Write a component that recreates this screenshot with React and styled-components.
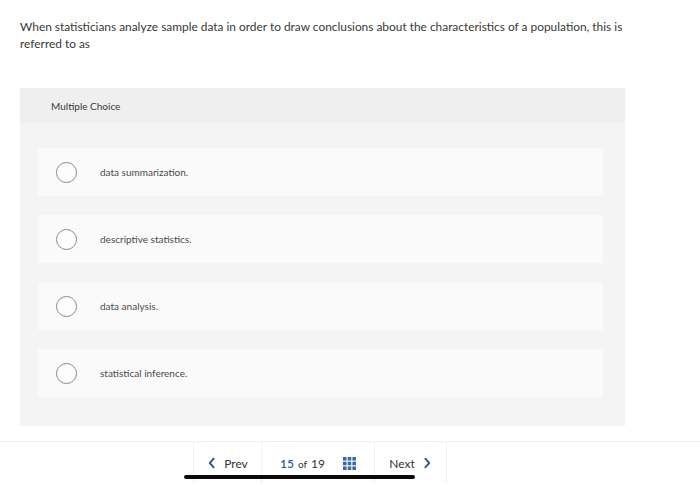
import React from 'react';
import styled, { createGlobalStyle } from 'styled-components';

const GlobalStyle = createGlobalStyle`
  html, body {
    margin: 0;
    padding: 0;
    background: #ffffff;
  }
  body {
    font-family: Lato, "Open Sans", "Liberation Sans", sans-serif;
    color: #333333;
  }
`;

const options = [
  'data summarization.',
  'descriptive statistics.',
  'data analysis.',
  'statistical inference.',
];

const App = () => {
  return (
    <>
      <GlobalStyle />
      <Page>
        <Question>
          When statisticians analyze sample data in order to draw conclusions about the characteristics of a
          population, this is referred to as
        </Question>
        <Panel>
          <PanelHeader>Multiple Choice</PanelHeader>
          <OptionList>
            {options.map((text) => (
              <OptionCard key={text}>
                <Radio />
                <OptionText>{text}</OptionText>
              </OptionCard>
            ))}
          </OptionList>
        </Panel>
        <Footer>
          <Nav>
            <NavItem $width={67}>
              <Chevron viewBox="0 0 10 14">
                <path d="M7.5 2 L3 7 L7.5 12" />
              </Chevron>
              <NavLabel>Prev</NavLabel>
            </NavItem>
            <NavItem $width={112}>
              <Counter>
                <Current>15</Current>
                <Of>of</Of>
                <span>19</span>
              </Counter>
              <GridIcon viewBox="0 0 13 13">
                {[0, 4.7, 9.4].map((y) =>
                  [0, 4.7, 9.4].map((x) => (
                    <rect key={`${x}-${y}`} x={x} y={y} width="3.6" height="3.6" />
                  ))
                )}
              </GridIcon>
            </NavItem>
            <NavItem $width={71} $last>
              <NavLabel>Next</NavLabel>
              <Chevron viewBox="0 0 10 14">
                <path d="M2.5 2 L7 7 L2.5 12" />
              </Chevron>
            </NavItem>
          </Nav>
          <HomeBar />
        </Footer>
      </Page>
    </>
  );
};

export default App;

const Page = styled.div`
  width: 700px;
  height: 485px;
  overflow: hidden;
  display: flex;
  flex-direction: column;
`;

const Question = styled.p`
  margin: 19px 0 0 20px;
  width: 620px;
  font-size: 11.9px;
  line-height: 16.5px;
  color: #383838;
`;

const Panel = styled.section`
  margin: 36px 0 0 20px;
  width: 605px;
  height: 338px;
  background: #f4f4f4;
  display: flex;
  flex-direction: column;
`;

const PanelHeader = styled.div`
  height: 35px;
  display: flex;
  align-items: center;
  padding-left: 31px;
  background: #efefef;
  font-size: 10px;
  color: #383838;
`;

const OptionList = styled.div`
  display: flex;
  flex-direction: column;
  gap: 19px;
  margin: 25px 0 0 18px;
  width: 565px;
`;

const OptionCard = styled.div`
  height: 48px;
  background: #fafafa;
  display: flex;
  align-items: center;
  padding-left: 18px;
  box-sizing: border-box;
`;

const Radio = styled.span`
  width: 19px;
  height: 19px;
  border-radius: 50%;
  border: 1.5px solid #7d8b98;
  background: #fdfdfd;
  flex-shrink: 0;
`;

const OptionText = styled.span`
  margin-left: 23px;
  font-size: 10px;
  color: #4a4a4a;
`;

const Footer = styled.footer`
  position: relative;
  margin-top: 15px;
  border-top: 1px solid #f0f0f0;
  flex: 1;
`;

const Nav = styled.nav`
  display: flex;
  margin-left: 193px;
  height: 42px;
`;

const NavItem = styled.div`
  width: ${({ $width }) => $width}px;
  display: flex;
  align-items: center;
  justify-content: center;
  gap: 8px;
  border-left: 1px solid #f2f2f2;
  border-right: ${({ $last }) => ($last ? '1px solid #f2f2f2' : 'none')};
  font-size: 12px;
  color: #333333;
`;

const NavLabel = styled.span`
  font-size: 12px;
`;

const Chevron = styled.svg`
  width: 9px;
  height: 12px;
  fill: none;
  stroke: #2f5d96;
  stroke-width: 2.3;
  stroke-linecap: round;
  stroke-linejoin: round;
`;

const Counter = styled.span`
  display: flex;
  align-items: baseline;
  gap: 4px;
  margin-right: 10px;
  font-size: 12px;
`;

const Current = styled.span`
  color: #2f5d96;
  font-weight: 600;
`;

const Of = styled.span`
  font-size: 10px;
`;

const GridIcon = styled.svg`
  width: 13px;
  height: 13px;
  fill: #3a6aa8;
`;

const HomeBar = styled.div`
  position: absolute;
  left: 184px;
  top: 33px;
  width: 231px;
  height: 4px;
  border-radius: 2px;
  background: #0a0a0a;
`;
